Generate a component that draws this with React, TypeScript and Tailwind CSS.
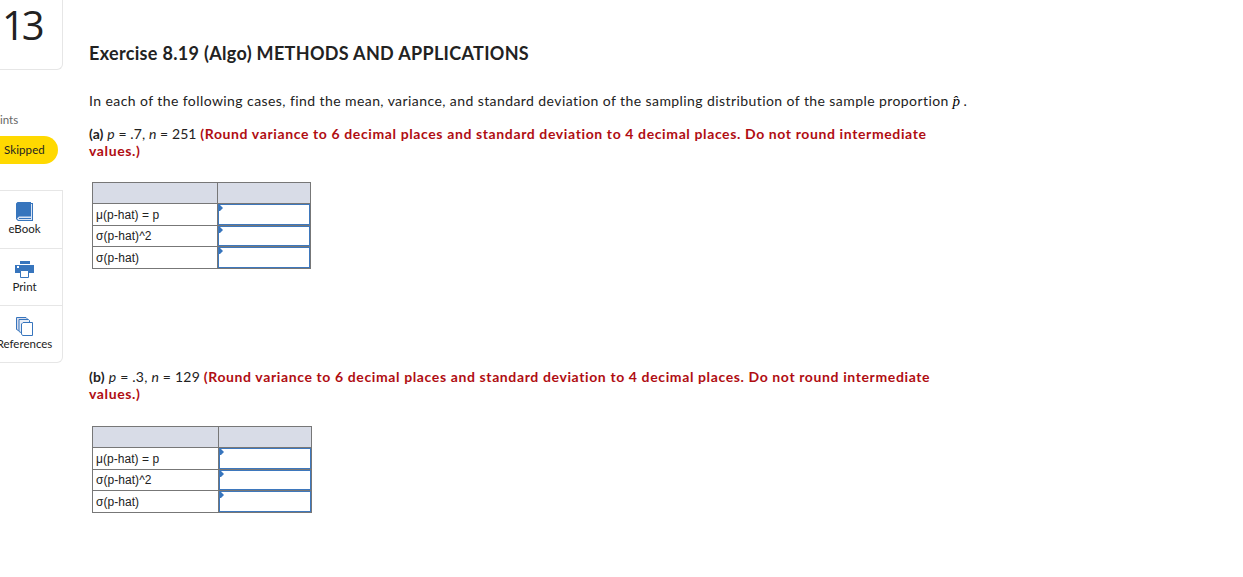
import React from 'react';

interface Case {
  label: string;
  p: string;
  n: string;
  grid: string;
  gap: string;
  givens: string;
}

const cases: Case[] = [
  { label: '(a)', p: '.7', n: '251', grid: 'grid-cols-[124px_92px]', gap: 'mt-[23px]', givens: 'tracking-[0.09px]' },
  { label: '(b)', p: '.3', n: '129', grid: 'grid-cols-[125px_92px]', gap: 'mt-6', givens: 'tracking-[0.22px]' },
];

const rowLabels = ['μ(p-hat) = p', 'σ(p-hat)^2', 'σ(p-hat)'];

function BookIcon() {
  return (
    <svg width="17" height="19" viewBox="0 0 17 19">
      <path d="M1.5 0H15v1h2v18H2l-2-2V1.5z" fill="#3775bd" />
      <path d="M3 14.5h12V2h1v16H2.5L1 16.5z" fill="#dbe5f5" />
      <path d="M3 16h12v1H3z" fill="#3775bd" />
    </svg>
  );
}

function PrinterIcon() {
  return (
    <svg width="19" height="17" viewBox="0 0 19 17">
      <path d="M5 0h10v3H5zM0 4h19v8H0z" fill="#3775bd" />
      <path d="M5.5 9.5h8v7h-8z" fill="#fff" stroke="#3775bd" />
      <path d="M2 5h2v2H2z" fill="#fff" />
    </svg>
  );
}

function PagesIcon() {
  return (
    <svg width="17" height="19" viewBox="0 0 17 19" fill="#fff" stroke="#3775bd">
      <path d="M.5.5h9.5l1 1v12H2.5l-2-1z" fill="#d9dceb" />
      <path d="M3 2.5h9.5l1 1v12H5l-2-1z" fill="#e8eef7" />
      <path d="M7 5.5h9.5v13H6.5L5.5 17V7z" />
    </svg>
  );
}

function Tool({ label, children }: { label: string; children: React.ReactNode }) {
  return (
    <button className="flex w-full flex-col items-center pr-[13px] text-[11.5px] leading-[14px] text-[#222]">
      <span className="mb-px flex h-[19px] items-center justify-center">{children}</span>
      <span className="whitespace-nowrap">{label}</span>
    </button>
  );
}

function Sidebar() {
  return (
    <aside className="w-[63px] shrink-0 overflow-hidden">
      <div className="h-[70px] rounded-br-md border-r border-b border-[#e6e6e6] pl-[2px] font-['Open_Sans',sans-serif] text-[40px] leading-[50px] tracking-[-3px] text-[#222]">
        13
      </div>
      <div className="mt-[42px] text-[11.5px] leading-4 text-[#666]">ints</div>
      <div className="mt-2 flex h-7 w-[58px] items-center rounded-r-full bg-[#ffd900] pl-1 text-[11.5px] tracking-[0.1px] text-[#222]">
        Skipped
      </div>
      <div className="mt-[26px] h-[173px] divide-y divide-[#e6e6e6] rounded-br-md border-t border-r border-b border-[#e6e6e6]">
        <div className="h-[58px] pt-[11px]"><Tool label="eBook"><BookIcon /></Tool></div>
        <div className="h-[57px] pt-[11px]"><Tool label="Print"><PrinterIcon /></Tool></div>
        <div className="h-[56px] pt-[11px]"><Tool label="References"><PagesIcon /></Tool></div>
      </div>
    </aside>
  );
}

function AnswerTable({ grid }: { grid: string }) {
  return (
    <div className={`ml-[3px] grid w-fit ${grid} grid-rows-[20px_21px_20px_21px] gap-px bg-[#777] p-px font-['Liberation_Sans',sans-serif] text-xs tracking-[0.05px] text-[#222]`}>
      <div className="bg-[#d8dce7]" />
      <div className="bg-[#d8dce7]" />
      {rowLabels.map((label) => (
        <React.Fragment key={label}>
          <div className="flex items-center bg-white pl-[3px]">{label}</div>
          <div className="border border-[#3e78bd] bg-white">
            <svg width="4" height="6" viewBox="0 0 4 6" className="block">
              <path d="M0 0h1l3 3-3 3H0z" fill="#3775bd" />
            </svg>
          </div>
        </React.Fragment>
      ))}
    </div>
  );
}

export default function App() {
  return (
    <div className="flex h-[577px] overflow-hidden bg-white font-['Lato',sans-serif]">
      <Sidebar />
      <main className="flex-1 pt-[41px] pl-[26px] text-sm leading-[17px] text-[#222]">
        <h1 className="text-lg leading-6 font-bold tracking-[0.32px] whitespace-nowrap">
          Exercise 8.19 (Algo) METHODS AND APPLICATIONS
        </h1>
        <p className="mt-[27px] h-[17px] whitespace-nowrap">
          <span className="tracking-[0.42px]">
            In each of the following cases, find the mean, variance, and standard deviation of the sampling distribution of the sample proportion
          </span>{' '}
          <span className="font-['Liberation_Serif',serif] text-[15px] leading-none text-black italic">p̂</span> .
        </p>
        {cases.map((c, i) => (
          <section key={c.label} className={i === 0 ? 'mt-4 h-[243px]' : ''}>
            <p className="whitespace-nowrap">
              <span className={c.givens}>
                <b>{c.label}</b> <i>p</i> = {c.p}, <i>n</i> = {c.n}{' '}
              </span>
              <b className="tracking-[0.62px] text-[#b00d12]">
                (Round variance to 6 decimal places and standard deviation to 4 decimal places. Do not round intermediate
                <br />
                values.)
              </b>
            </p>
            <div className={c.gap}>
              <AnswerTable grid={c.grid} />
            </div>
          </section>
        ))}
      </main>
    </div>
  );
}
